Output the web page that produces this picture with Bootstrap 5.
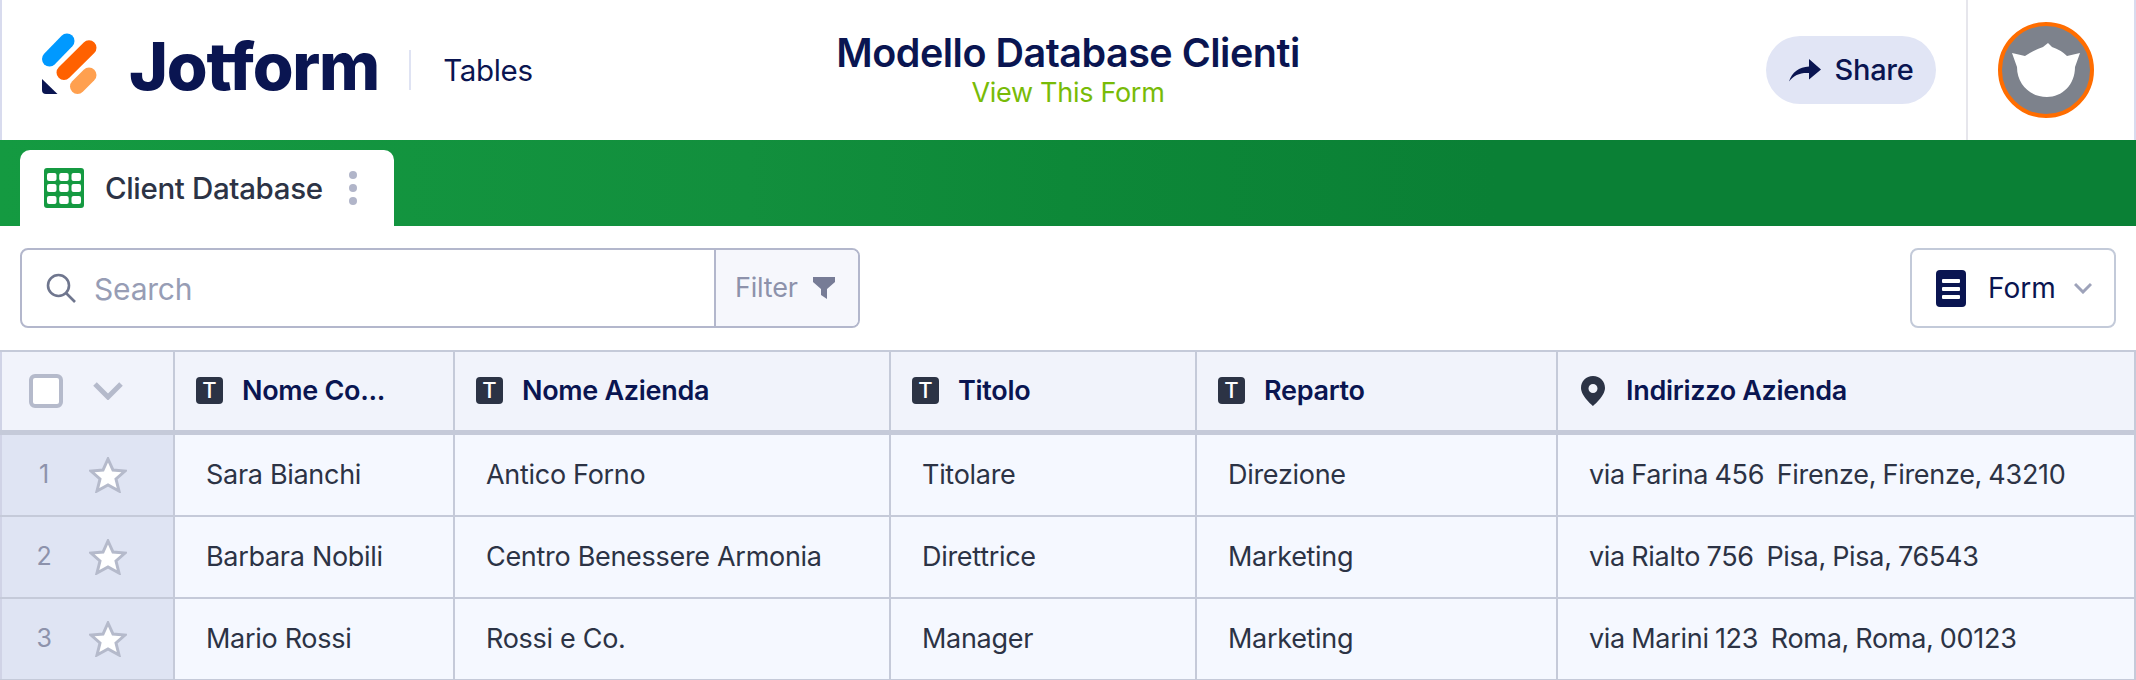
<!DOCTYPE html>
<html lang="it"><head><meta charset="utf-8"><title>Modello Database Clienti</title>
<link href="https://cdn.jsdelivr.net/npm/bootstrap@5.3.0/dist/css/bootstrap.min.css" rel="stylesheet">
<style>
html,body{height:680px;overflow:hidden;background:#fff}
body{font-family:Inter,"Liberation Sans",sans-serif;color:#2c3345}
.top-bar{height:140px;border-left:2px solid #d8dbee;border-right:2px solid #d8dbee;background:#fff;color:#0a1551}
.side-zone{flex:1 1 0;min-width:0;padding-left:40px}
.logo-word{font-size:66px;font-weight:800;letter-spacing:-1.2px;line-height:1;margin-left:32px;color:#0a1551;margin-top:-8px}
.logo-sep{width:2px;height:40px;background:#dfe3f3;margin:0 32px 0 30px}
.tables-word{font-size:29.5px;font-weight:400;letter-spacing:-.3px}
.mid-zone{flex:none;padding-bottom:4px}
.form-title{font-size:39.5px;font-weight:600;line-height:50px;letter-spacing:-.5px;color:#0a1551}
.form-link{font-size:27px;line-height:30px;color:#78bb07;letter-spacing:-.3px}
.share-btn{height:68px;width:170px;border-radius:34px;background:#e1e5f5;font-size:29px;font-weight:500;color:#0a1551;border:0;margin-right:30px;gap:14px;letter-spacing:-.3px}
.avatar-zone{width:168px;height:140px;border-left:2px solid #e6e6ec;padding-right:10px}
.avatar-ring{width:96px;height:96px;border-radius:50%;background:#7d828c;border:4px solid #ff6d00}
.green-strip{height:86px;background:linear-gradient(90deg,#149a41 0%,#128f3d 35%,#0d8838 50%,#0a8035 70%,#0a8035 100%);padding:10px 0 0 20px}
.sheet-tab{width:374px;height:76px;background:#fff;border-radius:10px 10px 0 0;padding:0 0 0 24px;gap:21px}
.tab-title{font-size:29.5px;font-weight:500;letter-spacing:-.35px;color:#2c3345;width:223px}
.dots-col{gap:5px}
.dots-col i{display:block;width:8px;height:8px;border-radius:50%;background:#b1b5c9}
.tool-row{padding:22px 20px 0 20px;height:92px}
.search-group{width:840px;height:80px;border:2px solid #b3b7cc;border-radius:8px;background:#fff}
.search-field{flex:1;padding-left:24px;gap:18px;font-size:30px;color:#979db5;letter-spacing:-.2px;padding-top:2px}
.search-field svg{margin-top:-2px}
.filter-part{width:144px;border-left:2px solid #b3b7cc;background:#f6f7fc;border-radius:0 6px 6px 0;font-size:27px;color:#8d92ab;gap:15px;letter-spacing:-.2px;padding-left:19px}
.form-pick{width:206px;height:80px;border:2px solid #c3cad9;border-radius:8px;background:#fff;font-size:28px;color:#0a1551;padding-left:24px}
.form-label-txt{margin:0 18px 0 22px}
.data-table{table-layout:fixed;width:2136px;margin:32px 0 0;border-collapse:collapse;--bs-table-bg:transparent}
.data-table th,.data-table td{border:0;border-right:2px solid #c5cad9;padding:0;vertical-align:middle;white-space:nowrap;overflow:hidden;font-size:27px;letter-spacing:-.3px}
.data-table th{height:81px;background:#f1f3fb;border-top:2px solid #c5cad9;border-bottom:5px solid #c5cad9;font-weight:600;color:#0a1551;padding-left:21px}
.data-table td{height:82px;background:#f5f8ff;border-bottom:2px solid #c5cad9;color:#2c3345;padding-left:31px;font-weight:400}
.data-table tbody tr:first-child td{height:84px}
.data-table td.addr-cell{word-spacing:-1px}
.data-table td.row-head{background:#dfe4f3;padding:0}
.data-table th.row-head{padding:0}
.data-table tr>*:first-child{border-left:2px solid #d0d3e6}
.head-in{gap:19px}
.type-chip{width:27px;height:27px;border-radius:4px;background:#2c3345;color:#fff;font-size:22px;font-weight:500;line-height:27px;text-align:center;flex:none;letter-spacing:0}
.check-box{width:34px;height:34px;border:4px solid #b5bacb;border-radius:6px;background:#fff;margin-left:27px}
.chev-down{margin-left:30px}
.row-num{width:84px;color:#8d92ab;font-size:25px;text-align:center}
.star-mark{margin-left:3px}
.pin-mark{margin:0 2px}
</style></head>
<body>
<header class="top-bar d-flex align-items-center">
  <div class="side-zone d-flex align-items-center">
    <svg width="55" height="61" viewBox="0 0 55 61" class="flex-shrink-0" style="margin-top:-14px" aria-hidden="true"><g fill="none" stroke-width="15" stroke-linecap="round"><path d="M7.5 26 25 8" stroke="#0099ff"/><path d="M22 39.500 47 14.700" stroke="#ff6100"/><path d="M35.500 53.500 47 42" stroke="#ffa04f"/></g><path d="M0 46 15.500 61H4a4 4 0 0 1-4-4Z" fill="#0a1551"/></svg>
    <span class="logo-word">Jotform</span>
    <span class="logo-sep"></span>
    <span class="tables-word">Tables</span>
  </div>
  <div class="mid-zone text-center">
    <div class="form-title">Modello Database Clienti</div>
    <div class="form-link">View This Form</div>
  </div>
  <div class="side-zone d-flex align-items-center justify-content-end">
    <button class="share-btn d-flex align-items-center justify-content-center"><svg width="32" height="23" viewBox="0 0 32 23"><path d="M0 22.5C3 13 10 8 20 7.5V0l12 10.500-12 10V14C11 13.500 5 16 0 22.500Z" fill="#0a1551"/></svg>Share</button>
    <div class="avatar-zone d-flex align-items-center justify-content-center">
      <div class="avatar-ring d-flex align-items-center justify-content-center"><svg width="68" height="54" viewBox="0 0 68 54"><path d="M0 10 13 13Q22 7 31 4L36 0 40 4Q49 7 55 13L68 10 63 24C63 42 50 54 35 54 19 54 5 42 5 24Z" fill="#fff"/></svg></div>
    </div>
  </div>
</header>
<div class="green-strip d-flex">
  <div class="sheet-tab d-flex align-items-center">
    <svg width="40" height="40" viewBox="0 0 40 40"><rect width="40" height="40" rx="3" fill="#159a41"/><g fill="#fff"><rect x="3" y="5" width="9.500" height="8" rx="2"/><rect x="15.200" y="5" width="9.500" height="8" rx="2"/><rect x="27.500" y="5" width="9.500" height="8" rx="2"/><rect x="3" y="16" width="9.500" height="8" rx="2"/><rect x="15.200" y="16" width="9.500" height="8" rx="2"/><rect x="27.500" y="16" width="9.500" height="8" rx="2"/><rect x="3" y="28" width="9.500" height="8" rx="2"/><rect x="15.200" y="28" width="9.500" height="8" rx="2"/><rect x="27.500" y="28" width="9.500" height="8" rx="2"/></g></svg>
    <span class="tab-title">Client Database</span>
    <span class="dots-col d-flex flex-column"><i></i><i></i><i></i></span>
  </div>
</div>
<div class="tool-row d-flex justify-content-between">
  <div class="search-group d-flex">
    <div class="search-field d-flex align-items-center"><svg width="30" height="30" viewBox="0 0 30 30" fill="none" stroke="#6f768e" stroke-width="2.600"><circle cx="12.500" cy="12.500" r="10.500"/><path d="M20 20 29 29"/></svg><span>Search</span></div>
    <div class="filter-part d-flex align-items-center"><span>Filter</span><svg width="22" height="22" viewBox="0 0 22 22"><path d="M0 0H22V5L14 12V22L8 18V12L0 5Z" fill="#777c96"/></svg></div>
  </div>
  <div class="form-pick d-flex align-items-center">
    <svg width="30" height="37" viewBox="0 0 30 37"><rect width="30" height="37" rx="4" fill="#0a1551"/><g fill="#fff"><rect x="6" y="9" width="18" height="4" rx="1"/><rect x="6" y="17" width="18" height="4" rx="1"/><rect x="6" y="25" width="18" height="4" rx="1"/></g></svg>
    <span class="form-label-txt">Form</span>
    <svg width="18" height="12" viewBox="0 0 18 12" fill="none" stroke="#9ea3ba" stroke-width="3"><path d="M1 2 9 10 17 2"/></svg>
  </div>
</div>
<table class="table data-table">
  <colgroup><col style="width:173px"><col style="width:280px"><col style="width:436px"><col style="width:306px"><col style="width:361px"><col></colgroup>
  <thead><tr>
    <th class="row-head"><div class="d-flex align-items-center"><span class="check-box"></span><svg class="chev-down" width="30" height="18" viewBox="0 0 30 18" fill="none" stroke="#b5bacb" stroke-width="5"><path d="M2 2 15 15 28 2"/></svg></div></th>
    <th><div class="head-in d-flex align-items-center"><span class="type-chip">T</span><span>Nome Co...</span></div></th>
    <th><div class="head-in d-flex align-items-center"><span class="type-chip">T</span><span>Nome Azienda</span></div></th>
    <th><div class="head-in d-flex align-items-center"><span class="type-chip">T</span><span>Titolo</span></div></th>
    <th><div class="head-in d-flex align-items-center"><span class="type-chip">T</span><span>Reparto</span></div></th>
    <th><div class="head-in d-flex align-items-center"><svg class="pin-mark" width="24" height="30" viewBox="0 0 24 30"><path fill-rule="evenodd" d="M12 0C5 0 0 5 0 12c0 8 12 18 12 18s12-10 12-18C24 5 19 0 12 0Zm0 8a4.500 4.500 0 1 1 0 9 4.500 4.500 0 0 1 0-9Z" fill="#2c3345"/></svg><span>Indirizzo Azienda</span></div></th>
  </tr></thead>
  <tbody>
    <tr><td class="row-head"><div class="d-flex align-items-center"><span class="row-num">1</span><svg class="star-mark" width="38" height="36" viewBox="0 0 38 36"><path d="M19 2 24 13 36 14 27 22 30 34 19 28 8 34 11 22 2 14 14 13Z" fill="#fff" stroke="#b5bacb" stroke-width="3"/></svg></div></td><td>Sara Bianchi</td><td>Antico Forno</td><td>Titolare</td><td>Direzione</td><td class="addr-cell">via Farina 456&nbsp; Firenze, Firenze, 43210</td></tr>
    <tr><td class="row-head"><div class="d-flex align-items-center"><span class="row-num">2</span><svg class="star-mark" width="38" height="36" viewBox="0 0 38 36"><path d="M19 2 24 13 36 14 27 22 30 34 19 28 8 34 11 22 2 14 14 13Z" fill="#fff" stroke="#b5bacb" stroke-width="3"/></svg></div></td><td>Barbara Nobili</td><td>Centro Benessere Armonia</td><td>Direttrice</td><td>Marketing</td><td class="addr-cell">via Rialto 756&nbsp; Pisa, Pisa, 76543</td></tr>
    <tr><td class="row-head"><div class="d-flex align-items-center"><span class="row-num">3</span><svg class="star-mark" width="38" height="36" viewBox="0 0 38 36"><path d="M19 2 24 13 36 14 27 22 30 34 19 28 8 34 11 22 2 14 14 13Z" fill="#fff" stroke="#b5bacb" stroke-width="3"/></svg></div></td><td>Mario Rossi</td><td>Rossi e Co.</td><td>Manager</td><td>Marketing</td><td class="addr-cell">via Marini 123&nbsp; Roma, Roma, 00123</td></tr>
  </tbody>
</table>
</body></html>
